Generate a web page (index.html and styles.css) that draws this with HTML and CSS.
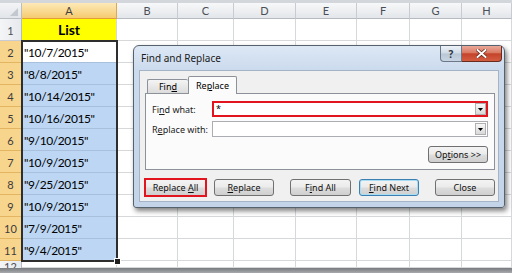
FILE: index.html
```html
<!DOCTYPE html>
<html>
<head>
<meta charset="utf-8">
<title>Find and Replace</title>
<link rel="stylesheet" href="styles.css">
</head>
<body>
<div class="app">
  <div class="topstrip"></div>
  <div class="grid">
    <div class="corner"><svg class="tri" width="20" height="15" viewBox="0 0 20 15"><polygon points="18,5 18,13 10,13" fill="#c3c8ce"/></svg></div>
    <div class="ch sel">A</div>
    <div class="ch">B</div>
    <div class="ch">C</div>
    <div class="ch">D</div>
    <div class="ch">E</div>
    <div class="ch">F</div>
    <div class="ch">G</div>
    <div class="ch">H</div>

    <div class="rh">1</div>
    <div class="c a1">List</div>
    <div class="c"></div><div class="c"></div><div class="c"></div><div class="c"></div><div class="c"></div><div class="c"></div><div class="c"></div>

    <div class="rh sel">2</div>
    <div class="c d active">"10/7/2015"</div>
    <div class="c"></div><div class="c"></div><div class="c"></div><div class="c"></div><div class="c"></div><div class="c"></div><div class="c"></div>

    <div class="rh sel">3</div>
    <div class="c d">"8/8/2015"</div>
    <div class="c"></div><div class="c"></div><div class="c"></div><div class="c"></div><div class="c"></div><div class="c"></div><div class="c"></div>

    <div class="rh sel">4</div>
    <div class="c d">"10/14/2015"</div>
    <div class="c"></div><div class="c"></div><div class="c"></div><div class="c"></div><div class="c"></div><div class="c"></div><div class="c"></div>

    <div class="rh sel">5</div>
    <div class="c d">"10/16/2015"</div>
    <div class="c"></div><div class="c"></div><div class="c"></div><div class="c"></div><div class="c"></div><div class="c"></div><div class="c"></div>

    <div class="rh sel">6</div>
    <div class="c d">"9/10/2015"</div>
    <div class="c"></div><div class="c"></div><div class="c"></div><div class="c"></div><div class="c"></div><div class="c"></div><div class="c"></div>

    <div class="rh sel">7</div>
    <div class="c d">"10/9/2015"</div>
    <div class="c"></div><div class="c"></div><div class="c"></div><div class="c"></div><div class="c"></div><div class="c"></div><div class="c"></div>

    <div class="rh sel">8</div>
    <div class="c d">"9/25/2015"</div>
    <div class="c"></div><div class="c"></div><div class="c"></div><div class="c"></div><div class="c"></div><div class="c"></div><div class="c"></div>

    <div class="rh sel">9</div>
    <div class="c d">"10/9/2015"</div>
    <div class="c"></div><div class="c"></div><div class="c"></div><div class="c"></div><div class="c"></div><div class="c"></div><div class="c"></div>

    <div class="rh sel">10</div>
    <div class="c d">"7/9/2015"</div>
    <div class="c"></div><div class="c"></div><div class="c"></div><div class="c"></div><div class="c"></div><div class="c"></div><div class="c"></div>

    <div class="rh sel">11</div>
    <div class="c d">"9/4/2015"</div>
    <div class="c"></div><div class="c"></div><div class="c"></div><div class="c"></div><div class="c"></div><div class="c"></div><div class="c"></div>

    <div class="rh last">12</div>
    <div class="c"></div><div class="c"></div><div class="c"></div><div class="c"></div><div class="c"></div><div class="c"></div><div class="c"></div><div class="c"></div>
  </div>
  <div class="bottombar"></div>

  <div class="selection"></div>
  <div class="fillhandle"></div>

  <div class="dialog">
    <div class="titlebar">
      <div class="title">Find and Replace</div>
      <div class="winbtns">
        <div class="help">?</div>
        <div class="close">
          <svg width="11" height="9" viewBox="0 0 11 9">
            <path d="M1.5 1 L9.5 8 M9.5 1 L1.5 8" stroke="#6e2a1c" stroke-width="3.4" stroke-linecap="square"/>
            <path d="M1.5 1 L9.5 8 M9.5 1 L1.5 8" stroke="#ffffff" stroke-width="1.9" stroke-linecap="square"/>
          </svg>
        </div>
      </div>
    </div>
    <div class="content">
      <div class="tabs">
        <div class="tab find"><span>Fin<u>d</u></span></div>
        <div class="tab replace"><span>Re<u>p</u>lace</span></div>
      </div>
      <div class="panel">
        <div class="row">
          <div class="label">Fi<u>n</u>d what:</div>
          <div class="field red">
            <span class="val">*</span>
            <span class="dd"><svg width="5" height="3" viewBox="0 0 5 3"><polygon points="0,0 5,0 2.5,3" fill="#000"/></svg></span>
          </div>
        </div>
        <div class="row gap">
          <div class="label">R<u>e</u>place with:</div>
          <div class="field">
            <span class="val"></span>
            <span class="dd in"><svg width="5" height="3" viewBox="0 0 5 3"><polygon points="0,0 5,0 2.5,3" fill="#000"/></svg></span>
          </div>
        </div>
        <div class="optrow">
          <div class="btn opt"><span>Op<u>t</u>ions &gt;&gt;</span></div>
        </div>
      </div>
      <div class="btnrow">
        <div class="btn ra"><span>Replace <u>A</u>ll</span></div>
        <div class="btn rep"><span><u>R</u>eplace</span></div>
        <div class="btn fa"><span>F<u>i</u>nd All</span></div>
        <div class="btn fn"><span><u>F</u>ind Next</span></div>
        <div class="btn cl"><span>Close</span></div>
      </div>
    </div>
  </div>
</div>
</body>
</html>
```
FILE: styles.css
```css
html, body {
  margin: 0;
  padding: 0;
}
body {
  width: 512px;
  height: 273px;
  overflow: hidden;
  background: #ffffff;
  font-family: Lato, "Liberation Sans", sans-serif;
}
.app {
  position: relative;
  width: 512px;
  height: 273px;
  overflow: hidden;
}
.topstrip {
  height: 3px;
  background: #d3d6da;
}
.grid {
  display: grid;
  grid-template-columns: 22px 95px 61px 56px 62px 61px 53px 52px 50px;
  grid-template-rows: 16px repeat(11, 22px) 7px;
  overflow: hidden;
}
.grid > div {
  box-sizing: border-box;
  border-right: 1px solid #d6d8da;
  border-bottom: 1px solid #d6d8da;
  overflow: hidden;
  white-space: nowrap;
}
.corner {
  position: relative;
  background: linear-gradient(#f3f4f6, #e2e5e9);
}
.grid > .corner {
  border-right-color: #b9bec5;
  border-bottom-color: #b9bec5;
}
.tri {
  position: absolute;
  left: 0;
  top: 0;
}
.ch {
  background: linear-gradient(#f7f8f9, #e3e6ea);
  color: #4a4f57;
  font-size: 11px;
  display: flex;
  align-items: center;
  justify-content: center;
}
.grid > .ch {
  border-right-color: #c8ccd2;
  border-bottom-color: #b6bbc2;
}
.grid > .ch.sel {
  background: linear-gradient(#fde9b8, #f6cb70);
  border-right-color: #d9a955;
  border-bottom-color: #e29c3a;
  color: #3e3e3e;
}
.rh {
  background: linear-gradient(90deg, #f4f5f7, #e6e9ed);
  color: #4a4f57;
  font-size: 11px;
  display: flex;
  align-items: flex-end;
  justify-content: center;
  padding-bottom: 3px;
}
.grid > .rh {
  border-right-color: #b6bbc2;
  border-bottom-color: #c8ccd2;
}
.grid > .rh.sel {
  background: #f8d58c;
  border-right-color: #e2a548;
  border-bottom-color: #e4b560;
  color: #3c3c3c;
}
.grid > .rh.last {
  align-items: flex-start;
  padding: 0;
  border-bottom: none;
  line-height: 12px;
}
.c {
  background: #ffffff;
}
.a1 {
  display: flex;
  align-items: flex-end;
  justify-content: center;
  padding-bottom: 2px;
  font-size: 14px;
  font-weight: bold;
  color: #000;
}
.grid > .a1 {
  background: #ffff00;
}
.d {
  display: flex;
  align-items: flex-end;
  padding: 0 0 2px 2px;
  font-size: 12px;
  line-height: 14px;
  letter-spacing: -0.4px;
  color: #000;
}
.grid > .d {
  background: #bcd6f3;
  border-bottom-color: #a9c0dd;
}
.grid > .d.active {
  background: #ffffff;
}
.bottombar {
  height: 5px;
  background: linear-gradient(#777a7e, #a7a9ac);
}
.selection {
  position: absolute;
  left: 21px;
  top: 40px;
  width: 97px;
  height: 222px;
  box-sizing: border-box;
  border: 2px solid #2e2e2e;
}
.fillhandle {
  position: absolute;
  left: 114px;
  top: 258px;
  width: 5px;
  height: 5px;
  background: #202020;
  border: 1px solid #ffffff;
}

/* dialog */
.dialog {
  position: absolute;
  left: 133px;
  top: 45px;
  width: 372px;
  box-sizing: border-box;
  border: 1px solid #56616e;
  border-radius: 6px 6px 3px 3px;
  background: linear-gradient(180deg, #dde8f5 0, #cbdaed 24px, #c4d4e8 100%);
  padding: 0 5px 5px;
  box-shadow: 2px 3px 5px rgba(0, 0, 0, 0.5);
  font-family: "Noto Sans", "Open Sans", sans-serif;
  font-size: 9px;
  color: #000;
  display: flex;
  flex-direction: column;
}
.titlebar {
  height: 24px;
  display: flex;
  align-items: flex-start;
  margin-right: -3px;
}
.title {
  font-size: 10px;
  line-height: 24px;
  padding-left: 2px;
  color: #1b1b1b;
}
.winbtns {
  margin-left: auto;
  display: flex;
}
.help {
  width: 22px;
  height: 16px;
  box-sizing: border-box;
  border: 1px solid #6b7888;
  border-top: none;
  border-radius: 0 0 0 4px;
  background: linear-gradient(#edf2f7, #d0dae6 48%, #b8c6d6 52%, #c9d5e3);
  display: flex;
  align-items: center;
  justify-content: center;
  font-weight: bold;
  font-size: 10px;
  color: #2d3542;
}
.close {
  width: 40px;
  height: 16px;
  box-sizing: border-box;
  border: 1px solid #6a2b1f;
  border-left: none;
  border-top: none;
  border-radius: 0 0 4px 0;
  background: linear-gradient(#eaa898, #da7a63 45%, #c5432b 52%, #d35d41);
  display: flex;
  align-items: center;
  justify-content: center;
}
.content {
  background: #f0f0f0;
  border: 1px solid #a4b3c5;
  padding: 5px 3px 4px 5px;
  display: flex;
  flex-direction: column;
}
.tabs {
  display: flex;
  align-items: flex-end;
  height: 17px;
  margin-left: 2px;
  position: relative;
  z-index: 1;
}
.tab {
  box-sizing: border-box;
  border: 1px solid #8d929a;
  border-bottom: none;
  border-radius: 2px 2px 0 0;
  display: flex;
  align-items: center;
  justify-content: center;
}
.tab.find {
  width: 41px;
  height: 14px;
  border-right: none;
  background: linear-gradient(#f4f4f4, #dcdcdc);
}
.tab.replace {
  width: 49px;
  height: 18px;
  margin-bottom: -1px;
  background: #fbfbfb;
  padding-bottom: 1px;
}
.panel {
  border: 1px solid #8d929a;
  background: #fbfbfb;
  padding: 7px 6px 6px;
  display: flex;
  flex-direction: column;
}
.row {
  display: flex;
  align-items: center;
  height: 16px;
}
.row.gap {
  margin-top: 4px;
}
.label {
  width: 60px;
  color: #1b1b1b;
}
.field {
  flex: 1;
  height: 16px;
  box-sizing: border-box;
  background: #ffffff;
  border: 1px solid #abadb3;
  display: flex;
  align-items: center;
  justify-content: space-between;
}
.field.red {
  border: 2px solid #e2141d;
}
.val {
  padding-left: 2px;
  align-self: flex-start;
  line-height: 11px;
}
.dd {
  width: 11px;
  height: 12px;
  box-sizing: border-box;
  border: 1px solid #b0b0b0;
  background: linear-gradient(#f8f8f8, #d8d8d8);
  display: flex;
  align-items: center;
  justify-content: center;
}
.dd.in {
  margin-right: 1px;
}
.optrow {
  display: flex;
  justify-content: flex-end;
  margin-top: 9px;
}
.btn {
  height: 17px;
  box-sizing: border-box;
  border: 1px solid #707070;
  border-radius: 3px;
  background: linear-gradient(#f3f3f3 0, #ebebeb 48%, #dddddd 52%, #cfcfcf 100%);
  display: flex;
  align-items: center;
  justify-content: center;
  color: #111;
  white-space: nowrap;
}
.btn.opt {
  width: 60px;
}
.btnrow {
  display: flex;
  align-items: center;
  height: 19px;
  margin-top: 8px;
  margin-left: -1px;
}
.btn.ra {
  width: 63px;
  height: 19px;
  border: 2px solid #e2141d;
  border-radius: 0;
}
.btn.rep {
  width: 60px;
  margin-left: 7px;
}
.btn.fa {
  width: 61px;
  margin-left: 16px;
}
.btn.fn {
  width: 60px;
  margin-left: 8px;
  border-color: #3c7fb1;
  box-shadow: inset 0 0 0 1px #a9dcf5;
}
.btn.cl {
  width: 60px;
  margin-left: 16px;
}
u {
  text-decoration: underline;
  text-underline-offset: 1px;
}
```
